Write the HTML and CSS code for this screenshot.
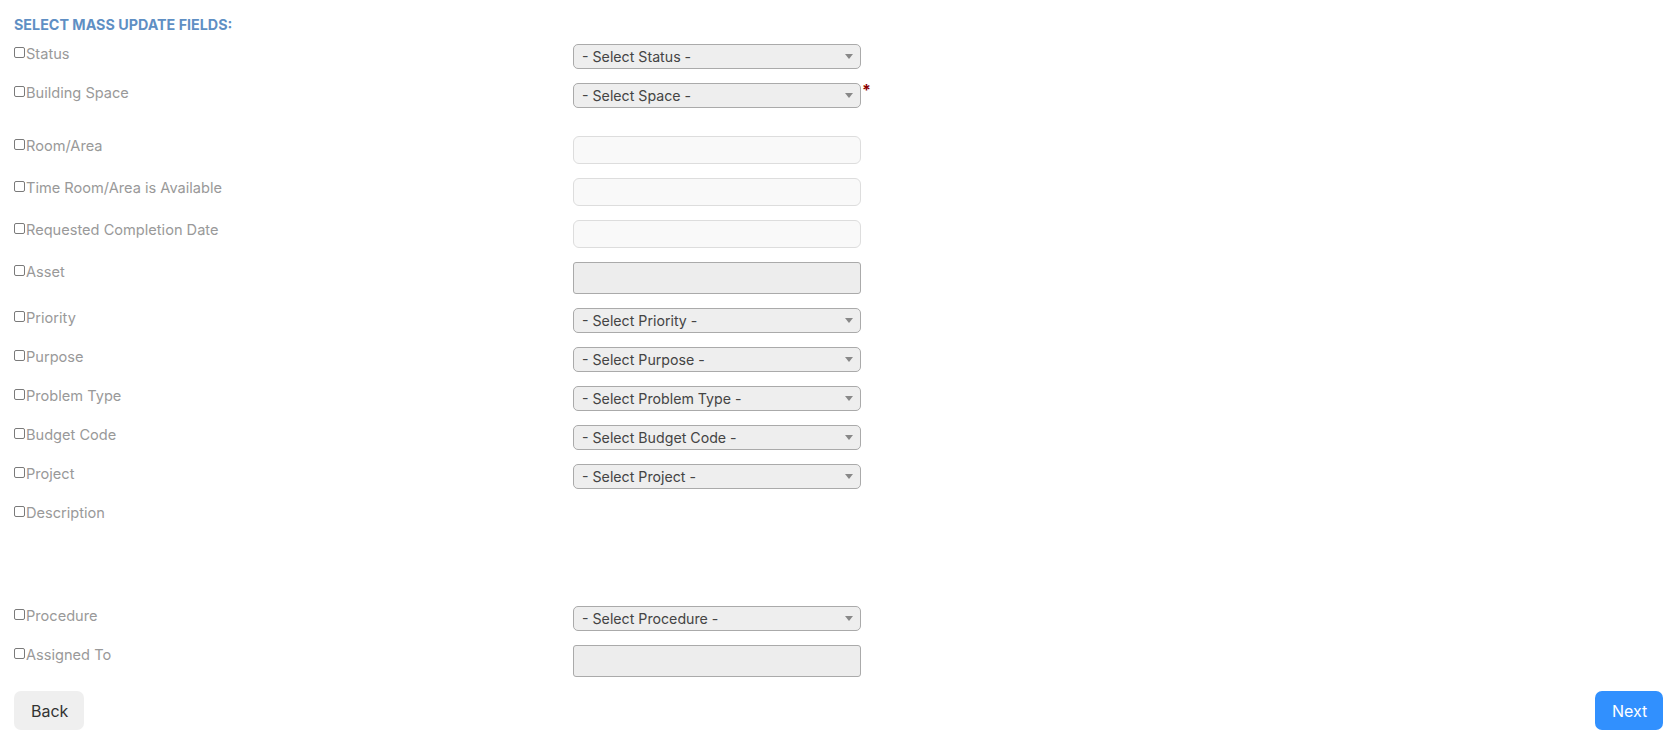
FILE: index.html
```html
<!DOCTYPE html>
<html>
<head>
<meta charset="utf-8">
<link rel="stylesheet" href="styles.css">
</head>
<body>
<div class="page">
  <h3 class="title">SELECT MASS UPDATE FIELDS:</h3>
  <div class="form">
    <label class="lbl"><input type="checkbox" class="cb">Status</label>
    <div class="ctl"><div class="sel"><select><option>- Select Status -</option></select></div></div>

    <label class="lbl"><input type="checkbox" class="cb">Building Space</label>
    <div class="ctl"><div class="sel"><select><option>- Select Space -</option></select></div><span class="req">*</span><div class="msg"></div></div>

    <label class="lbl"><input type="checkbox" class="cb">Room/Area</label>
    <div class="ctl"><input type="text" class="txt"></div>

    <label class="lbl"><input type="checkbox" class="cb">Time Room/Area is Available</label>
    <div class="ctl"><input type="text" class="txt"></div>

    <label class="lbl"><input type="checkbox" class="cb">Requested Completion Date</label>
    <div class="ctl"><input type="text" class="txt"></div>

    <label class="lbl"><input type="checkbox" class="cb">Asset</label>
    <div class="ctl"><div class="box"></div></div>

    <label class="lbl"><input type="checkbox" class="cb">Priority</label>
    <div class="ctl"><div class="sel"><select><option>- Select Priority -</option></select></div></div>

    <label class="lbl"><input type="checkbox" class="cb">Purpose</label>
    <div class="ctl"><div class="sel"><select><option>- Select Purpose -</option></select></div></div>

    <label class="lbl"><input type="checkbox" class="cb">Problem Type</label>
    <div class="ctl"><div class="sel"><select><option>- Select Problem Type -</option></select></div></div>

    <label class="lbl"><input type="checkbox" class="cb">Budget Code</label>
    <div class="ctl"><div class="sel"><select><option>- Select Budget Code -</option></select></div></div>

    <label class="lbl"><input type="checkbox" class="cb">Project</label>
    <div class="ctl"><div class="sel"><select><option>- Select Project -</option></select></div></div>

    <label class="lbl"><input type="checkbox" class="cb">Description</label>
    <div class="ctl"><div class="desc"></div></div>

    <label class="lbl"><input type="checkbox" class="cb">Procedure</label>
    <div class="ctl"><div class="sel"><select><option>- Select Procedure -</option></select></div></div>

    <label class="lbl"><input type="checkbox" class="cb">Assigned To</label>
    <div class="ctl"><div class="box"></div></div>
  </div>
  <div class="actions">
    <button class="btn back">Back</button>
    <button class="btn next">Next</button>
  </div>
</div>
</body>
</html>
```

FILE: styles.css
```css
html, body {
  margin: 0;
  padding: 0;
  background: #fff;
}
body {
  font-family: Inter, "Noto Sans", "Liberation Sans", sans-serif;
}
.page {
  padding: 17px 7px 0 14px;
}
.title {
  margin: 0 0 11px 0;
  font-size: 14.3px;
  line-height: 16px;
  font-weight: 700;
  color: #5f8fc4;
}
.form {
  display: grid;
  grid-template-columns: 559px 300px;
  row-gap: 14px;
  align-items: start;
}
.lbl {
  display: flex;
  align-items: flex-start;
  font-size: 14.6px;
  line-height: 17px;
  color: #999;
  padding-top: 1.8px;
}
.cb {
  appearance: none;
  -webkit-appearance: none;
  width: 11px;
  height: 11px;
  margin: 1.5px 1px 0 0;
  border: 1px solid #7a7a7a;
  border-radius: 2px;
  background: #fff;
  box-sizing: border-box;
  flex: none;
}
.ctl {
  display: flex;
  flex-wrap: wrap;
  align-items: flex-start;
  width: 300px;
}
.sel {
  position: relative;
  width: 288px;
  height: 25px;
}
.sel select {
  appearance: none;
  -webkit-appearance: none;
  width: 288px;
  height: 25px;
  box-sizing: border-box;
  border: 1px solid #aaa;
  border-radius: 5px;
  background: #eee;
  color: #444;
  font-family: Inter, "Noto Sans", "Liberation Sans", sans-serif;
  font-size: 14.2px;
  padding: 0 0 0 8px;
  margin: 0;
}
.sel::after {
  content: "";
  position: absolute;
  right: 8px;
  top: 10px;
  border-left: 4px solid transparent;
  border-right: 4px solid transparent;
  border-top: 5px solid #888;
}
.req {
  color: #8b0000;
  font-size: 16px;
  font-weight: 700;
  line-height: 16px;
  margin: -1px 0 0 1px;
  height: 12px;
}
.msg {
  flex-basis: 100%;
  height: 14px;
}
.txt {
  width: 288px;
  height: 28px;
  box-sizing: border-box;
  border: 1px solid #ddd;
  border-radius: 6px;
  background: #f9f9f9;
  margin: 0;
  padding: 0 8px;
}
.box {
  width: 288px;
  height: 32px;
  box-sizing: border-box;
  border: 1px solid #aaa;
  border-radius: 3px;
  background: #ededed;
}
.desc {
  height: 89px;
}
.actions {
  display: flex;
  justify-content: space-between;
  margin-top: 14px;
}
.btn {
  height: 39px;
  border: none;
  border-radius: 7px;
  font-family: Inter, "Noto Sans", "Liberation Sans", sans-serif;
  font-size: 16px;
  padding: 0 17px;
}
.back {
  width: 70px;
  background: #efefef;
  color: #333;
}
.next {
  width: 68px;
  background: #3190fe;
  color: #fff;
}
```
